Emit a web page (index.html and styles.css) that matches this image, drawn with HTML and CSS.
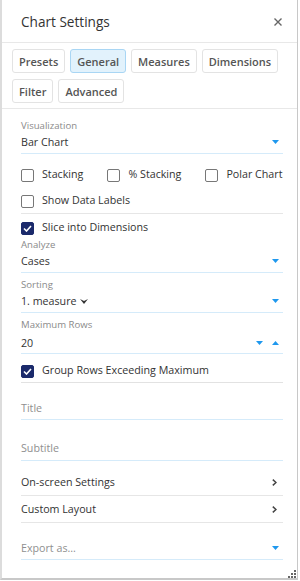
FILE: index.html
```html
<!DOCTYPE html>
<html lang="en">
<head>
<meta charset="utf-8">
<title>Chart Settings</title>
<link rel="stylesheet" href="styles.css">
</head>
<body>
<div class="panel">
  <header class="head">
    <h1 class="title">Chart Settings</h1>
    <button class="close" aria-label="Close">
      <svg width="8" height="8" viewBox="0 0 8 8"><path d="M0.5 0.5 L7.5 7.5 M7.5 0.5 L0.5 7.5" stroke="#666" stroke-width="1.4" fill="none"/></svg>
    </button>
  </header>
  <nav class="tabs">
    <button class="tab">Presets</button>
    <button class="tab active">General</button>
    <button class="tab">Measures</button>
    <button class="tab">Dimensions</button>
    <button class="tab">Filter</button>
    <button class="tab">Advanced</button>
  </nav>
  <main class="body">
    <div class="field f-vis">
      <div class="label">Visualization</div>
      <div class="row"><span class="value">Bar Chart</span><svg class="caret" width="7" height="4" viewBox="0 0 7 4"><path d="M0 0 H7 L3.5 4 Z"/></svg></div>
    </div>

    <div class="checks">
      <div class="check-line">
        <label class="check"><span class="box"></span>Stacking</label>
        <label class="check"><span class="box"></span>% Stacking</label>
        <label class="check"><span class="box"></span>Polar Chart</label>
      </div>
      <div class="check-line">
        <label class="check"><span class="box"></span>Show Data Labels</label>
      </div>
    </div>

    <div class="check-line slice">
      <label class="check"><span class="box on"><svg width="9" height="7" viewBox="0 0 9 7"><path d="M1 3.5 L3.5 6 L8 1" stroke="#fff" stroke-width="1.6" fill="none"/></svg></span>Slice into Dimensions</label>
    </div>

    <div class="field f-analyze">
      <div class="label">Analyze</div>
      <div class="row"><span class="value">Cases</span><svg class="caret" width="7" height="4" viewBox="0 0 7 4"><path d="M0 0 H7 L3.5 4 Z"/></svg></div>
    </div>

    <div class="field f-sort">
      <div class="label">Sorting</div>
      <div class="row"><span class="value">1. measure<svg class="sort-chev" width="8" height="5" viewBox="0 0 8 5"><path d="M0 0 L4 1.9 L8 0 L4 5 Z"/></svg></span><svg class="caret" width="7" height="4" viewBox="0 0 7 4"><path d="M0 0 H7 L3.5 4 Z"/></svg></div>
    </div>

    <div class="field f-max">
      <div class="label">Maximum Rows</div>
      <div class="row"><span class="value">20</span>
        <span class="spin">
          <svg class="caret" width="7" height="4" viewBox="0 0 7 4"><path d="M0 0 H7 L3.5 4 Z"/></svg>
          <svg class="caret" width="7" height="4" viewBox="0 0 7 4"><path d="M0 4 H7 L3.5 0 Z"/></svg>
        </span>
      </div>
    </div>

    <div class="group">
      <div class="check-line">
        <label class="check"><span class="box on"><svg width="9" height="7" viewBox="0 0 9 7"><path d="M1 3.5 L3.5 6 L8 1" stroke="#fff" stroke-width="1.6" fill="none"/></svg></span>Group Rows Exceeding Maximum</label>
      </div>
    </div>

    <div class="field input f-title">
      <div class="row"><span class="ph">Title</span></div>
    </div>
    <div class="field input f-subtitle">
      <div class="row"><span class="ph">Subtitle</span></div>
    </div>

    <div class="link f-onscreen">
      <div class="row"><span class="value">On-screen Settings</span><svg class="chev" width="5" height="7" viewBox="0 0 5 7"><path d="M0.8 0.6 L4 3.5 L0.8 6.4" stroke="#444" stroke-width="1.5" fill="none"/></svg></div>
    </div>
    <div class="link f-custom">
      <div class="row"><span class="value">Custom Layout</span><svg class="chev" width="5" height="7" viewBox="0 0 5 7"><path d="M0.8 0.6 L4 3.5 L0.8 6.4" stroke="#444" stroke-width="1.5" fill="none"/></svg></div>
    </div>

    <div class="field f-export">
      <div class="row"><span class="ph">Export as...</span><svg class="caret" width="7" height="4" viewBox="0 0 7 4"><path d="M0 0 H7 L3.5 4 Z"/></svg></div>
    </div>
  </main>
  <svg class="grip" width="8" height="8" viewBox="0 0 8 8">
    <rect x="6" y="0" width="2" height="2"/>
    <rect x="3" y="3" width="2" height="2"/><rect x="6" y="3" width="2" height="2"/>
    <rect x="0" y="6" width="2" height="2"/><rect x="3" y="6" width="2" height="2"/><rect x="6" y="6" width="2" height="2"/>
  </svg>
</div>
</body>
</html>
```

FILE: styles.css
```css
* { box-sizing: border-box; }
html, body { margin: 0; padding: 0; background: #fff; }
body { font-family: "Open Sans", "Liberation Sans", sans-serif; color: #333; }

.panel {
  position: relative;
  width: 298px;
  height: 580px;
  border-left: 2px solid #dcdcdc;
  border-right: 1px solid #c8c8c8;
  border-bottom: 2px solid #c8c8c8;
  overflow: hidden;
  background: #fff;
}

.head {
  height: 43px;
  display: flex;
  align-items: center;
  justify-content: space-between;
  padding: 2px 15px 0 19px;
  border-bottom: 1px solid #e8e8e8;
}
.title {
  margin: 0;
  font-size: 13.6px;
  font-weight: 400;
  line-height: 18px;
  color: #333;
}
.close {
  border: 0;
  background: none;
  padding: 0;
  width: 8px;
  height: 8px;
  display: flex;
}

.tabs {
  display: flex;
  flex-wrap: wrap;
  gap: 6px 5px;
  padding: 6px 10px 5px;
  border-bottom: 1px solid #e8e8e8;
}
.tab {
  height: 24px;
  padding: 0 6px;
  border: 1px solid #e3e3e3;
  border-radius: 3px;
  background: #fff;
  font-family: "Open Sans", sans-serif;
  font-size: 11px;
  font-weight: 600;
  color: #555;
}
.tab.active {
  background: #e2f2fc;
  border-color: #a9d6f4;
}

.body {
  padding: 10px 14px 0 19px;
}

.label {
  font-size: 9.6px;
  line-height: 13px;
  color: #8a8a8a;
}
.row {
  height: 20px;
  display: flex;
  align-items: center;
  justify-content: space-between;
  font-size: 10.7px;
  line-height: 20px;
  padding-right: 4px;
}
.value { color: #333; display: flex; align-items: center; }
.ph { color: #8f8f8f; }
.caret { fill: #1e98ee; display: block; }
.spin { display: flex; gap: 9px; }
.sort-chev { fill: #333; margin-left: 3px; margin-top: 1px; }

.field {
  border-bottom: 1px solid #d5ebfa;
  padding-bottom: 1px;
}
.f-analyze { padding-top: 1px; }
.f-sort { padding-top: 5px; }
.f-max { padding-top: 5px; padding-bottom: 0; }
.f-max .row { margin-top: 2px; }
.f-title { padding-top: 15px; }
.f-subtitle { padding-top: 18px; padding-bottom: 2px; }
.f-export { padding-top: 15px; }

.checks {
  display: flex;
  flex-direction: column;
  gap: 6px;
  padding: 10px 0 3px;
  border-bottom: 1px solid #e6e6e6;
}
.check-line {
  display: flex;
  gap: 24px;
  height: 20px;
}
.check {
  display: flex;
  align-items: center;
  font-size: 10.7px;
  line-height: 20px;
  color: #333;
}
.box {
  width: 13px;
  height: 13px;
  margin-top: 3px;
  margin-right: 8px;
  border: 1px solid #777;
  border-radius: 2px;
  display: flex;
  align-items: center;
  justify-content: center;
  flex: none;
}
.box.on {
  background: #1b2a6b;
  border-color: #1b2a6b;
}
.slice { margin-top: 3px; }

.group {
  padding: 6px 0 2px;
  border-bottom: 1px solid #e2e2e2;
}

.link {
  border-bottom: 1px solid #e6e6e6;
  padding-bottom: 3px;
}
.link .row { padding-right: 6px; }
.f-onscreen { padding-top: 11px; }
.f-custom { padding-top: 3px; }
.chev { display: block; }

.grip {
  position: absolute;
  right: 1px;
  bottom: 0;
  fill: #666;
}
```
